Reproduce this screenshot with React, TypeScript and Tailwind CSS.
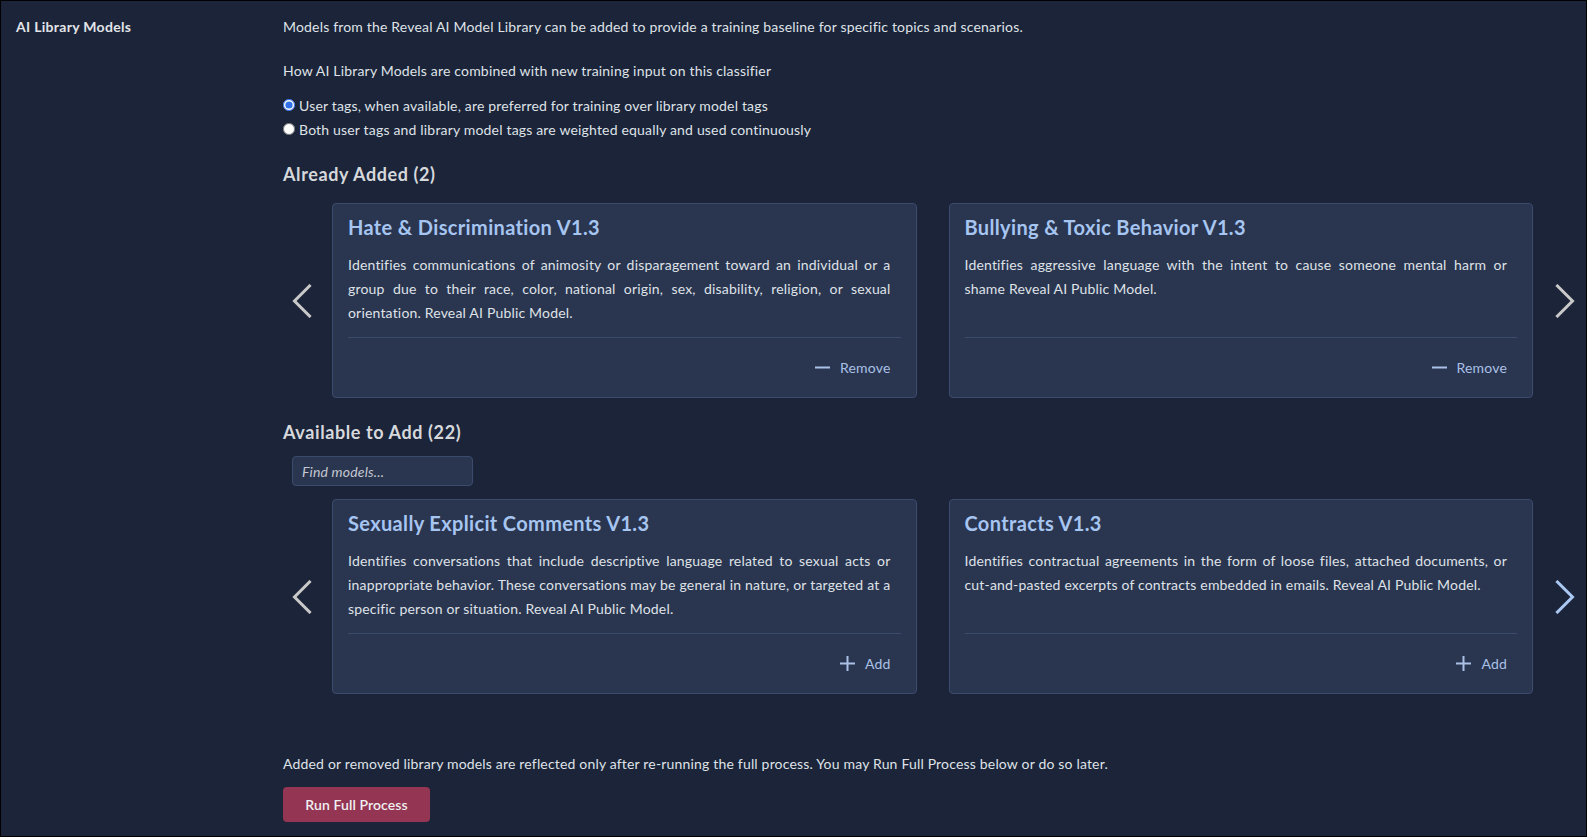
import React from "react";

const FONT = { fontFamily: "Lato, 'Noto Sans', sans-serif" };

function Chevron({ dir, active }: { dir: "left" | "right"; active?: boolean }) {
  const pts = dir === "left" ? "17.5,2 2.5,17 17.5,32" : "2.5,2 17.5,17 2.5,32";
  return (
    <svg width="20" height="34" viewBox="0 0 20 34" fill="none">
      <polyline
        points={pts}
        stroke={active ? "#a9c8f2" : "#c9c9c9"}
        strokeWidth="3"
        strokeLinejoin="miter"
        strokeLinecap="square"
      />
    </svg>
  );
}

function MinusIcon() {
  return (
    <svg width="15" height="15" viewBox="0 0 15 15">
      <rect x="0" y="6.5" width="15" height="2" fill="#a9c1e6" />
    </svg>
  );
}

function PlusIcon() {
  return (
    <svg width="15" height="15" viewBox="0 0 15 15">
      <rect x="0" y="6.5" width="15" height="2" fill="#a9c1e6" />
      <rect x="6.5" y="0" width="2" height="15" fill="#a9c1e6" />
    </svg>
  );
}

type Model = { title: string; desc: string };

function Card({ m, action }: { m: Model; action: "remove" | "add" }) {
  return (
    <div className="flex flex-col rounded-[4px] border border-[#3b4b6c] bg-[#2a3550] px-[15px] pt-[9px]">
      <div className="text-[20px] font-bold leading-[28px] tracking-[0.35px] text-[#a6c5f0]">{m.title}</div>
      <p className="mt-[12px] flex-1 pr-[10px] text-justify text-[14px] leading-[24px] tracking-[0.18px] text-[#dfe2e7]">
        {m.desc}
      </p>
      <div className="mt-[12px] h-px bg-[#3b4b6c]" />
      <div className="flex h-[59px] items-center justify-end pr-[10px]">
        <button className="flex items-center gap-[10px] text-[14px] tracking-[0.18px] text-[#a9c1e6]">
          {action === "remove" ? <MinusIcon /> : <PlusIcon />}
          <span>{action === "remove" ? "Remove" : "Add"}</span>
        </button>
      </div>
    </div>
  );
}

function Carousel({ models, action, activeRight }: { models: Model[]; action: "remove" | "add"; activeRight?: boolean }) {
  return (
    <div className="flex items-stretch">
      <div className="flex w-[49px] shrink-0 items-center pl-[9px]">
        <Chevron dir="left" />
      </div>
      <div className="grid flex-1 grid-cols-2 gap-[32px]">
        {models.map((m) => (
          <Card key={m.title} m={m} action={action} />
        ))}
      </div>
      <div className="flex w-[49px] shrink-0 items-center pl-[22px]">
        <Chevron dir="right" active={activeRight} />
      </div>
    </div>
  );
}

export default function App() {
  const added: Model[] = [
    {
      title: "Hate & Discrimination V1.3",
      desc: "Identifies communications of animosity or disparagement toward an individual or a group due to their race, color, national origin, sex, disability, religion, or sexual orientation. Reveal AI Public Model.",
    },
    {
      title: "Bullying & Toxic Behavior V1.3",
      desc: "Identifies aggressive language with the intent to cause someone mental harm or shame Reveal AI Public Model.",
    },
  ];
  const available: Model[] = [
    {
      title: "Sexually Explicit Comments V1.3",
      desc: "Identifies conversations that include descriptive language related to sexual acts or inappropriate behavior. These conversations may be general in nature, or targeted at a specific person or situation. Reveal AI Public Model.",
    },
    {
      title: "Contracts V1.3",
      desc: "Identifies contractual agreements in the form of loose files, attached documents, or cut-and-pasted excerpts of contracts embedded in emails. Reveal AI Public Model.",
    },
  ];

  return (
    <div
      style={FONT}
      className="flex h-[837px] w-[1587px] border border-black bg-[#1b2439] text-[14px] tracking-[0.18px] text-[#dfe2e7]"
    >
      <div className="w-[282px] shrink-0 pl-[15px] pt-[16px]">
        <div className="text-[14px] font-bold leading-[20px] tracking-[0.3px] text-[#e2e4e8]">AI Library Models</div>
      </div>
      <div className="flex flex-1 flex-col pr-[4px] pt-[16px]">
        <p className="leading-[20px]">
          Models from the Reveal AI Model Library can be added to provide a training baseline for specific topics and scenarios.
        </p>
        <p className="mt-[24px] leading-[20px]">How AI Library Models are combined with new training input on this classifier</p>
        <div className="mt-[12px] flex flex-col">
          <label className="flex h-[24px] items-center gap-[4px]">
            <input type="radio" name="combine" defaultChecked className="m-0 h-[12px] w-[12px] accent-[#2f6fe8]" />
            <span>User tags, when available, are preferred for training over library model tags</span>
          </label>
          <label className="flex h-[24px] items-center gap-[4px]">
            <input type="radio" name="combine" className="m-0 h-[12px] w-[12px] accent-[#2f6fe8]" />
            <span>Both user tags and library model tags are weighted equally and used continuously</span>
          </label>
        </div>
        <h2 className="mt-[20px] text-[18px] font-bold leading-[26px] tracking-[0.6px] text-[#d6d8dc]">Already Added (2)</h2>
        <div className="mt-[16px]">
          <Carousel models={added} action="remove" />
        </div>
        <h2 className="mt-[21px] text-[18px] font-bold leading-[26px] tracking-[0.6px] text-[#d6d8dc]">Available to Add (22)</h2>
        <div className="ml-[9px] mt-[11px]">
          <input
            type="text"
            placeholder="Find models..."
            className="h-[30px] w-[181px] rounded-[4px] border border-[#3b4b6c] bg-[#2a3550] px-[9px] text-[14px] italic tracking-[0.18px] text-[#dfe2e7] outline-none placeholder:text-[#c4c8d0]"
          />
        </div>
        <div className="mt-[13px]">
          <Carousel models={available} action="add" activeRight />
        </div>
        <p className="mt-[60px] leading-[20px]">
          Added or removed library models are reflected only after re-running the full process. You may Run Full Process below or do so later.
        </p>
        <div className="mt-[13px]">
          <button className="h-[35px] w-[147px] rounded-[4px] bg-[#933553] text-[14px] font-semibold tracking-[0.1px] text-[#f0f0f0]">
            Run Full Process
          </button>
        </div>
      </div>
    </div>
  );
}
